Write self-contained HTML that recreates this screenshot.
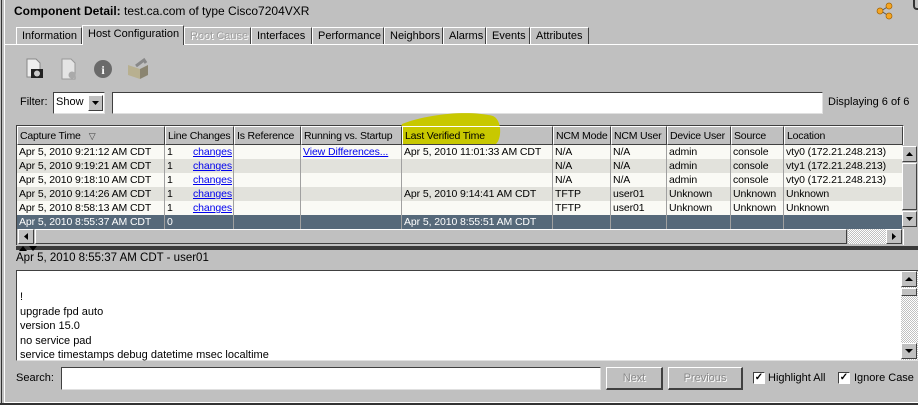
<!DOCTYPE html>
<html><head><meta charset="utf-8"><style>
*{margin:0;padding:0;box-sizing:border-box}
body{width:918px;height:405px;background:#c0c0c0;font-family:"Liberation Sans",sans-serif;font-size:11px;color:#000;position:relative;overflow:hidden}
.a{position:absolute;white-space:nowrap}
.tab{position:absolute;top:27px;height:17px;border-top:1px solid #fff;border-left:1px solid #fff;border-right:1px solid #404040;padding:2px 0 0 5px;font-size:11px;white-space:nowrap}
.hd{position:absolute;top:126px;height:19px;background:#c0c0c0;border-top:1px solid #fff;border-left:1px solid #fff;border-right:1px solid #404040;border-bottom:1px solid #404040;padding:3px 0 0 2px;font-size:10.5px;overflow:hidden;white-space:nowrap;letter-spacing:-0.2px}
.row{position:absolute;left:17px;width:885px;height:14px}
.c{position:absolute;top:0;height:14px;border-right:1px solid #a0a0a0;padding:1px 0 0 2px;font-size:10.5px;overflow:hidden;white-space:nowrap;letter-spacing:-0.1px}
.lk{color:#0000ee;text-decoration:underline}
.r{position:absolute;right:1px;top:1px}
.sb{position:absolute;background:#c0c0c0;border-top:1px solid #fff;border-left:1px solid #fff;border-right:1px solid #404040;border-bottom:1px solid #404040}
.btn{position:absolute;background:#c0c0c0;border-top:1px solid #fff;border-left:1px solid #fff;border-right:2px solid #404040;border-bottom:2px solid #404040;color:#8a8a8a;text-align:center;padding-top:4px;text-shadow:1px 1px #fff}
.cb{position:absolute;width:12px;height:12px;background:#fff;border-top:1px solid #404040;border-left:1px solid #404040;border-right:1px solid #fff;border-bottom:1px solid #fff;font-size:10px;line-height:10px;text-align:center;font-weight:bold}
.in{position:absolute;background:#fff;border-top:1px solid #404040;border-left:1px solid #404040;border-right:1px solid #e0e0e0;border-bottom:1px solid #e0e0e0}
</style></head><body>
<div class="a" style="left:1px;top:0;width:1px;height:405px;background:#333"></div>
<div class="a" style="left:4px;top:0;width:1px;height:403px;background:#fff"></div>
<div class="a" style="left:4px;top:402px;width:914px;height:1px;background:#fff"></div>
<div class="a" style="left:0;top:403px;width:918px;height:2px;background:#333"></div>

<div class="a" style="left:14px;top:4px;font-size:12px"><b>Component Detail:</b> test.ca.com of type Cisco7204VXR</div>
<svg class="a" style="left:875px;top:2px" width="20" height="18"><line x1="6" y1="9" x2="14" y2="4" stroke="#555"/><line x1="6" y1="9" x2="14" y2="14" stroke="#555"/><circle cx="5" cy="9" r="3" fill="#f5a623" stroke="#a06000" stroke-width=".7"/><circle cx="14" cy="4" r="3" fill="#f5a623" stroke="#a06000" stroke-width=".7"/><circle cx="14" cy="14" r="3" fill="#f5a623" stroke="#a06000" stroke-width=".7"/></svg>
<div class="a" style="left:913px;top:0;width:5px;height:10px;border-left:2px solid #333;border-bottom:2px solid #333;border-radius:0 0 0 4px"></div>

<div class="a" style="left:5px;top:44px;width:913px;height:1px;background:#fff"></div>
<div class="tab" style="left:16px;width:66px">Information</div>
<div class="tab" style="left:82px;top:25px;height:20px;width:102px;background:#c0c0c0;padding-top:2px">Host Configuration</div>
<div class="tab" style="left:184px;width:67px;text-shadow:1px 1px #fff"><span style="color:#a0a0a0">Root Cause</span></div>
<div class="tab" style="left:251px;width:61px">Interfaces</div>
<div class="tab" style="left:312px;width:72px">Performance</div>
<div class="tab" style="left:384px;width:59px">Neighbors</div>
<div class="tab" style="left:443px;width:43px">Alarms</div>
<div class="tab" style="left:486px;width:44px">Events</div>
<div class="tab" style="left:530px;width:59px">Attributes</div>

<svg class="a" style="left:22px;top:56px" width="130" height="26">
<path d="M5 3h9l4 4v14H5z" fill="#eee" stroke="#888"/><rect x="9" y="13" width="12" height="9" fill="#222"/><circle cx="15" cy="17.5" r="3" fill="#ccc"/>
<path d="M40 3h9l4 4v16H40z" fill="#e4e4e4" stroke="#999"/><circle cx="50" cy="19" r="3.5" fill="#aaa"/>
<circle cx="81" cy="13" r="9" fill="#6a6a6a"/><text x="81" y="18" font-size="12" font-weight="bold" fill="#fff" text-anchor="middle" font-family="Liberation Serif">i</text>
<path d="M106 9l12 4v10l-12-4z" fill="#b8b090"/><path d="M118 13l8-4v10l-8 4z" fill="#8a8470"/><path d="M114 10l8-6 2 3" stroke="#888" stroke-width="3" fill="none"/>
</svg>

<div class="a" style="left:20px;top:96px">Filter:</div>
<div class="in" style="left:53px;top:92px;width:52px;height:22px;padding:3px 0 0 2px">Show<div class="sb" style="right:1px;top:2px;width:15px;height:16px"><svg width="13" height="14"><path d="M3 5h7l-3.5 4z" fill="#000"/></svg></div></div>
<div class="in" style="left:112px;top:92px;width:711px;height:22px"></div>
<div class="a" style="left:828px;top:96px">Displaying 6 of 6</div>

<div class="a" style="left:16px;top:125px;width:888px;height:120px;border-top:1px solid #404040;border-left:1px solid #404040;border-right:1px solid #fff"></div>
<svg class="a" style="left:398px;top:110px" width="106" height="42"><path d="M4 14 C30 4 70 0 95 6 C104 10 104 28 98 34 L6 37 C2 30 2 20 4 14z" fill="#c8c800"/></svg>
<div class="hd" style="left:17px;width:148px">Capture Time &nbsp;&nbsp;<span style="font-size:9px;color:#444">▽</span></div>
<div class="hd" style="left:165px;width:69px">Line Changes</div>
<div class="hd" style="left:234px;width:67px">Is Reference</div>
<div class="hd" style="left:301px;width:101px">Running vs. Startup</div>
<div class="hd" style="left:402px;width:151px;background:transparent">Last Verified Time</div>
<div class="hd" style="left:553px;width:58px">NCM Mode</div>
<div class="hd" style="left:611px;width:56px">NCM User</div>
<div class="hd" style="left:667px;width:64px">Device User</div>
<div class="hd" style="left:731px;width:53px">Source</div>
<div class="hd" style="left:784px;width:119px">Location</div>

<div class="row" style="top:145px;background:#fafaf5"><div class="c" style="left:0;width:148px">Apr 5, 2010 9:21:12 AM CDT</div><div class="c" style="left:148px;width:69px">1<span class="lk r">changes</span></div><div class="c" style="left:217px;width:67px"></div><div class="c" style="left:284px;width:101px"><span class="lk">View Differences...</span></div><div class="c" style="left:385px;width:151px">Apr 5, 2010 11:01:33 AM CDT</div><div class="c" style="left:536px;width:58px">N/A</div><div class="c" style="left:594px;width:56px">N/A</div><div class="c" style="left:650px;width:64px">admin</div><div class="c" style="left:714px;width:53px">console</div><div class="c" style="left:767px;width:118px;border:0">vty0 (172.21.248.213)</div></div>
<div class="row" style="top:159px;background:#e2e2dc"><div class="c" style="left:0;width:148px">Apr 5, 2010 9:19:21 AM CDT</div><div class="c" style="left:148px;width:69px">1<span class="lk r">changes</span></div><div class="c" style="left:217px;width:67px"></div><div class="c" style="left:284px;width:101px"></div><div class="c" style="left:385px;width:151px"></div><div class="c" style="left:536px;width:58px">N/A</div><div class="c" style="left:594px;width:56px">N/A</div><div class="c" style="left:650px;width:64px">admin</div><div class="c" style="left:714px;width:53px">console</div><div class="c" style="left:767px;width:118px;border:0">vty1 (172.21.248.213)</div></div>
<div class="row" style="top:173px;background:#fafaf5"><div class="c" style="left:0;width:148px">Apr 5, 2010 9:18:10 AM CDT</div><div class="c" style="left:148px;width:69px">1<span class="lk r">changes</span></div><div class="c" style="left:217px;width:67px"></div><div class="c" style="left:284px;width:101px"></div><div class="c" style="left:385px;width:151px"></div><div class="c" style="left:536px;width:58px">N/A</div><div class="c" style="left:594px;width:56px">N/A</div><div class="c" style="left:650px;width:64px">admin</div><div class="c" style="left:714px;width:53px">console</div><div class="c" style="left:767px;width:118px;border:0">vty0 (172.21.248.213)</div></div>
<div class="row" style="top:187px;background:#e2e2dc"><div class="c" style="left:0;width:148px">Apr 5, 2010 9:14:26 AM CDT</div><div class="c" style="left:148px;width:69px">1<span class="lk r">changes</span></div><div class="c" style="left:217px;width:67px"></div><div class="c" style="left:284px;width:101px"></div><div class="c" style="left:385px;width:151px">Apr 5, 2010 9:14:41 AM CDT</div><div class="c" style="left:536px;width:58px">TFTP</div><div class="c" style="left:594px;width:56px">user01</div><div class="c" style="left:650px;width:64px">Unknown</div><div class="c" style="left:714px;width:53px">Unknown</div><div class="c" style="left:767px;width:118px;border:0">Unknown</div></div>
<div class="row" style="top:201px;background:#fafaf5"><div class="c" style="left:0;width:148px">Apr 5, 2010 8:58:13 AM CDT</div><div class="c" style="left:148px;width:69px">1<span class="lk r">changes</span></div><div class="c" style="left:217px;width:67px"></div><div class="c" style="left:284px;width:101px"></div><div class="c" style="left:385px;width:151px"></div><div class="c" style="left:536px;width:58px">TFTP</div><div class="c" style="left:594px;width:56px">user01</div><div class="c" style="left:650px;width:64px">Unknown</div><div class="c" style="left:714px;width:53px">Unknown</div><div class="c" style="left:767px;width:118px;border:0">Unknown</div></div>
<div class="row" style="top:215px;background:#56697a;color:#fff"><div class="c" style="left:0;width:148px">Apr 5, 2010 8:55:37 AM CDT</div><div class="c" style="left:148px;width:69px">0</div><div class="c" style="left:217px;width:67px"></div><div class="c" style="left:284px;width:101px"></div><div class="c" style="left:385px;width:151px">Apr 5, 2010 8:55:51 AM CDT</div><div class="c" style="left:536px;width:58px"></div><div class="c" style="left:594px;width:56px"></div><div class="c" style="left:650px;width:64px"></div><div class="c" style="left:714px;width:53px"></div><div class="c" style="left:767px;width:118px;border:0"></div></div>

<div class="a" style="left:902px;top:145px;width:16px;height:84px;background:#c0c0c0"></div>
<div class="sb" style="left:902px;top:146px;width:15px;height:16px"><svg width="13" height="14"><path d="M3 9h7l-3.5-4z"/></svg></div>
<div class="sb" style="left:902px;top:163px;width:15px;height:47px"></div>
<div class="sb" style="left:902px;top:211px;width:15px;height:16px"><svg width="13" height="14"><path d="M3 5h7l-3.5 4z"/></svg></div>
<div class="a" style="left:17px;top:229px;width:885px;height:15px;background:#c0c0c0"></div>
<div class="sb" style="left:18px;top:229px;width:16px;height:15px"><svg width="14" height="13"><path d="M9 3v7l-4-3.5z"/></svg></div>
<div class="sb" style="left:35px;top:229px;width:812px;height:15px"></div>
<div class="a" style="left:848px;top:229px;width:38px;height:15px;background:repeating-conic-gradient(#fff 0 25%,#c0c0c0 0 50%) 0 0/2px 2px"></div>
<div class="sb" style="left:886px;top:229px;width:16px;height:15px"><svg width="14" height="13"><path d="M5 3v7l4-3.5z"/></svg></div>

<div class="a" style="left:16px;top:246px;width:902px;height:4px;background:#3a3a3a"></div>
<svg class="a" style="left:18px;top:244px" width="22" height="8"><path d="M1 7l4-5 4 5z" fill="#000"/><path d="M11 2h8l-4 5z" fill="#000"/></svg>
<div class="a" style="left:16px;top:252px;font-size:11.5px">Apr 5, 2010 8:55:37 AM CDT - user01</div>

<div class="in" style="left:16px;top:270px;width:902px;height:91px;border-right:0"></div>
<div class="a" style="left:20px;top:290px;line-height:14.6px;font-size:11px">!<br>upgrade fpd auto<br>version 15.0<br>no service pad<br>service timestamps debug datetime msec localtime</div>
<div class="a" style="left:901px;top:271px;width:17px;height:89px;background:repeating-conic-gradient(#fff 0 25%,#c0c0c0 0 50%) 0 0/2px 2px"></div>
<div class="sb" style="left:901px;top:271px;width:16px;height:16px"><svg width="14" height="14"><path d="M3 9h8l-4-4z"/></svg></div>
<div class="sb" style="left:901px;top:288px;width:16px;height:8px"></div>
<div class="sb" style="left:901px;top:343px;width:16px;height:16px"><svg width="14" height="14"><path d="M3 5h8l-4 4z"/></svg></div>

<div class="a" style="left:16px;top:372px">Search:</div>
<div class="in" style="left:61px;top:367px;width:540px;height:23px"></div>
<div class="btn" style="left:606px;top:367px;width:57px;height:23px">Next</div>
<div class="btn" style="left:668px;top:367px;width:75px;height:23px">Previous</div>
<div class="cb" style="left:753px;top:372px">✓</div>
<div class="a" style="left:768px;top:372px">Highlight All</div>
<div class="cb" style="left:838px;top:372px">✓</div>
<div class="a" style="left:854px;top:372px">Ignore Case</div>
</body></html>
